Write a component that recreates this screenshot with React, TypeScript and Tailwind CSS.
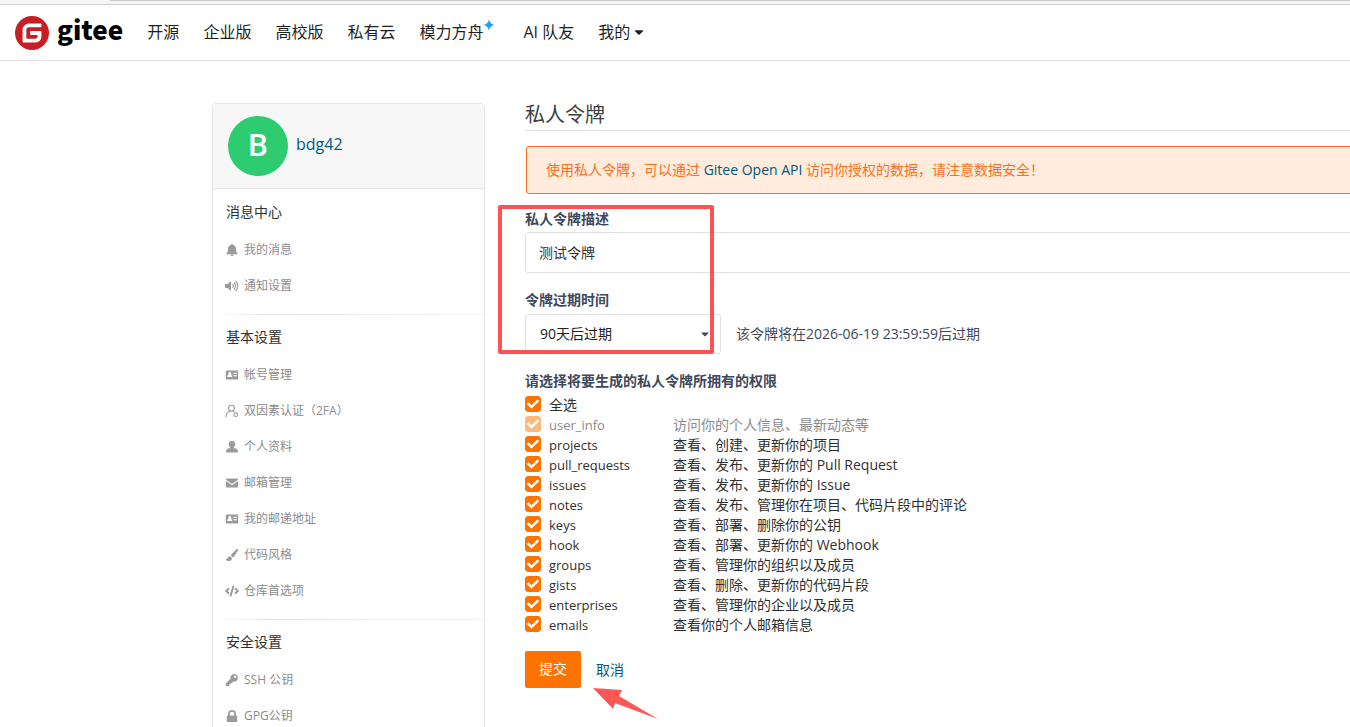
import type { ReactNode } from 'react'
import { FaCheck, FaCode, FaCaretDown } from 'react-icons/fa'
import { SiGitee } from 'react-icons/si'

type NavItem = { label: string; star?: boolean; caret?: boolean }
type MenuItem = { label: string; icon: ReactNode }
type Scope = { name: string; desc: string; locked?: boolean }

function Glyph({ children }: { children: ReactNode }) {
  return (
    <svg viewBox="0 0 14 14" className="size-3.5" fill="currentColor" aria-hidden="true">
      {children}
    </svg>
  )
}

const bell = (
  <Glyph>
    <path d="M7 1c.6 0 1 .4 1 .9 1.900.4 3 1.900 3 4 0 2.300.5 3.600 1.700 4.600v.8H1.300v-.8C2.500 9.500 3 8.200 3 5.900c0-2.100 1.100-3.600 3-4C6 1.400 6.400 1 7 1zM5.500 11.800h3a1.500 1.500 0 0 1-3 0z" />
  </Glyph>
)
const volume = (
  <Glyph>
    <path d="M0 5h2.500L6 2v10L2.500 9H0z" />
    <path d="M7.500 5.200a2.500 2.500 0 0 1 0 3.600M9 3.500a5 5 0 0 1 0 7M10.500 1.900a7 7 0 0 1 0 10.200" fill="none" stroke="currentColor" strokeWidth="1.100" />
  </Glyph>
)
const card = (
  <Glyph>
    <path fillRule="evenodd" d="M1.500 2.500h11c.4 0 .7.300.7.700v7.600c0 .4-.3.700-.7.700h-11c-.4 0-.7-.3-.7-.7V3.200c0-.4.3-.7.700-.7zM4.700 4a1.500 1.500 0 0 0-1 2.600C2.700 7 2.300 7.800 2.300 9h4.900c0-1.200-.4-2-1.400-2.400A1.500 1.500 0 0 0 4.700 4zM8.300 4.800v1h3.700v-1zM8.300 7.300v1h3.700v-1z" />
  </Glyph>
)
const userKey = (
  <Glyph>
    <g fill="none" stroke="currentColor" strokeWidth="1.100">
      <circle cx="6.500" cy="4.200" r="2.900" />
      <path d="M1 13c0-3.200 1.400-5 4-5.800M8 6.800l1.500 1.200" />
      <circle cx="10.700" cy="10.700" r="1.800" />
    </g>
  </Glyph>
)
const user = (
  <Glyph>
    <path d="M7 1a3.300 3.300 0 0 1 3.300 3.300c0 1.400-.6 2.500-1.500 3.100v.7c2.500.4 4.200 1.200 4.200 3.300v.6c0 .3-.3.500-.6.500H1.600c-.3 0-.6-.2-.6-.5v-.6c0-2.100 1.700-2.900 4.200-3.300v-.7C4.300 6.800 3.700 5.700 3.700 4.300A3.300 3.300 0 0 1 7 1z" />
  </Glyph>
)
const mail = (
  <Glyph>
    <path d="M1 3.200c0-.4.3-.7.700-.7h10.600c.4 0 .7.300.7.700v.5L7 8 1 3.700zM1 5l6 4.300L13 5v5.800c0 .4-.3.700-.7.700H1.700c-.4 0-.7-.3-.7-.7z" />
  </Glyph>
)
const brush = (
  <Glyph>
    <path d="M12.800 1.100c.5.400.3 1 .1 1.500L9.200 8.300c-.4.600-.9.900-1.500.9L6 7.600c0-.6.300-1.100.8-1.600l4.700-4.700c.4-.3.900-.5 1.300-.2zM5.200 8.200l1.800 1.700c0 2-1.300 3.100-3.400 3.100C2.100 13 1 12.300.7 10.900c.9.400 1.500.2 1.800-.7.400-1.300 1.400-2 2.700-2z" />
  </Glyph>
)
const key = (
  <Glyph>
    <path fillRule="evenodd" d="M9.200.9a3.900 3.900 0 1 1-1 7.700L6.900 9.900H5.600v1.300H4.300v1.300l-.6.500H1.300c-.3 0-.5-.2-.5-.5v-2l4.700-4.700A3.900 3.900 0 0 1 9.200.9zm1 1.700a1.200 1.200 0 1 0 0 2.400 1.200 1.200 0 0 0 0-2.400z" />
  </Glyph>
)
const lock = (
  <Glyph>
    <path fillRule="evenodd" d="M2.500 6.500H3V5a4 4 0 0 1 8 0v1.500h.5c.4 0 .7.300.7.700v5.100c0 .4-.3.700-.7.700h-9c-.4 0-.7-.3-.7-.7V7.200c0-.4.3-.7.700-.7zm2.300 0h4.400V5a2.200 2.200 0 0 0-4.400 0z" />
  </Glyph>
)

const navItems: NavItem[] = [
  { label: '开源' },
  { label: '企业版' },
  { label: '高校版' },
  { label: '私有云' },
  { label: '模力方舟', star: true },
  { label: 'AI 队友' },
  { label: '我的', caret: true },
]

const menu: { title: string; items: MenuItem[] }[] = [
  {
    title: '消息中心',
    items: [
      { label: '我的消息', icon: bell },
      { label: '通知设置', icon: volume },
    ],
  },
  {
    title: '基本设置',
    items: [
      { label: '帐号管理', icon: card },
      { label: '双因素认证（2FA）', icon: userKey },
      { label: '个人资料', icon: user },
      { label: '邮箱管理', icon: mail },
      { label: '我的邮递地址', icon: card },
      { label: '代码风格', icon: brush },
      { label: '仓库首选项', icon: <FaCode className="size-3.5" /> },
    ],
  },
  {
    title: '安全设置',
    items: [
      { label: 'SSH 公钥', icon: key },
      { label: 'GPG公钥', icon: lock },
    ],
  },
]

const scopes: Scope[] = [
  { name: 'user_info', desc: '访问你的个人信息、最新动态等', locked: true },
  { name: 'projects', desc: '查看、创建、更新你的项目' },
  { name: 'pull_requests', desc: '查看、发布、更新你的 Pull Request' },
  { name: 'issues', desc: '查看、发布、更新你的 Issue' },
  { name: 'notes', desc: '查看、发布、管理你在项目、代码片段中的评论' },
  { name: 'keys', desc: '查看、部署、删除你的公钥' },
  { name: 'hook', desc: '查看、部署、更新你的 Webhook' },
  { name: 'groups', desc: '查看、管理你的组织以及成员' },
  { name: 'gists', desc: '查看、删除、更新你的代码片段' },
  { name: 'enterprises', desc: '查看、管理你的企业以及成员' },
  { name: 'emails', desc: '查看你的个人邮箱信息' },
]

function Header() {
  return (
    <header className="flex h-14 items-center border-b border-[#e3e6e9] bg-white pl-[15px]">
      <a href="#" className="flex items-center gap-2 text-black">
        <SiGitee className="size-[34px] text-[#c71d23]" />
        <span className="pb-2 font-['Noto_Sans_CJK_SC',sans-serif] text-[26px] leading-8 font-black">gitee</span>
      </a>
      <nav className="ml-6 flex items-center gap-6 pb-0.5 text-base text-[#1f1f1f]">
        {navItems.map((item) => (
          <a key={item.label} href="#" className="flex items-center">
            {item.label}
            {item.star && (
              <svg viewBox="0 0 12 12" className="mr-1 mb-3.5 size-3" fill="#1e9fff" aria-hidden="true">
                <path d="M6 0c.7 3.500 2 5.100 6 6-4 .9-5.300 2.500-6 6-.7-3.500-2-5.100-6-6 4-.9 5.300-2.500 6-6z" />
              </svg>
            )}
            {item.caret && <FaCaretDown className="ml-0.5 size-3.5" />}
          </a>
        ))}
      </nav>
    </header>
  )
}

function Sidebar() {
  return (
    <aside className="w-[273px] shrink-0 rounded-t border border-[#e3e6e9]">
      <div className="flex items-center gap-2 border-b border-[#e3e6e9] bg-[#f7f7f8] py-3 pl-[15px]">
        <span className="flex size-[60px] items-center justify-center rounded-full bg-[#2ecc71] font-['Roboto',sans-serif] text-[31px] font-medium text-white">
          B
        </span>
        <a href="#" className="pb-1 text-base text-[#005980]">
          bdg42
        </a>
      </div>
      {menu.map((section, i) => (
        <section key={section.title}>
          {i > 0 && <div className="-mb-px h-px bg-linear-to-r from-transparent via-[#e3e6e9] via-20% to-[#f4f4f4]" />}
          <div className="pt-[5px] pb-2.5 pl-3">
            <h2 className="mb-0.5 flex h-9 items-center pl-px text-sm text-[#303030]">{section.title}</h2>
            {section.items.map((item) => (
              <a key={item.label} href="#" className="flex h-9 items-center gap-[5px] text-xs text-[#8c8c8c]">
                <span className="flex w-3.5 shrink-0 text-[#9b9b9b]">{item.icon}</span>
                {item.label}
              </a>
            ))}
          </div>
        </section>
      ))}
    </aside>
  )
}

function ScopeBox({ locked }: { locked?: boolean }) {
  return (
    <span className="mr-2 grid size-4 shrink-0">
      <input
        type="checkbox"
        defaultChecked
        disabled={locked}
        className="peer col-start-1 row-start-1 size-4 appearance-none rounded-[3px] border border-[#dce3e8] checked:border-[#fe7300] checked:bg-[#fe7300] disabled:opacity-50"
      />
      <FaCheck className="pointer-events-none invisible z-10 col-start-1 row-start-1 size-3 place-self-center text-white peer-checked:visible" />
    </span>
  )
}

function TokenForm() {
  return (
    <form className="relative text-sm leading-5" onSubmit={(e) => e.preventDefault()}>
      <label htmlFor="desc" className="block pt-[15px] pb-[3px] font-bold text-[#40485b]">
        私人令牌描述
      </label>
      <input
        id="desc"
        defaultValue="测试令牌"
        className="h-[41px] w-full rounded-[3px] border border-[#dfe1e6] bg-white px-[13px] pb-0.5 text-[#303030] outline-none"
      />
      <label htmlFor="expire" className="block pt-[17px] pb-1 font-bold text-[#40485b]">
        令牌过期时间
      </label>
      <div className="flex items-center gap-[15px]">
        <div className="grid w-[196px] items-center">
          <select
            id="expire"
            className="col-start-1 row-start-1 h-10 appearance-none rounded-[3px] border border-[#dfe1e6] bg-white px-3.5 text-[#212121] outline-none"
          >
            <option>90天后过期</option>
          </select>
          <FaCaretDown className="pointer-events-none col-start-1 row-start-1 mr-2.5 size-3 justify-self-end text-[#40485b]" />
        </div>
        <span className="text-[#40485b]">该令牌将在2026-06-19 23:59:59后过期</span>
      </div>
      <fieldset>
        <legend className="pt-[17px] pb-[5px] font-bold text-[#40485b]">请选择将要生成的私人令牌所拥有的权限</legend>
        <label className="flex h-5 leading-[18px] text-[#303030]">
          <ScopeBox />
          全选
        </label>
        <ul>
          {scopes.map((scope) => (
            <li key={scope.name}>
              <label className={scope.locked ? 'flex h-5 leading-[18px] text-[#8c8c8c]' : 'flex h-5 leading-[18px] text-[#303030]'}>
                <ScopeBox locked={scope.locked} />
                <span className="w-[124px] shrink-0 text-[13px]">{scope.name}</span>
                <span>{scope.desc}</span>
              </label>
            </li>
          ))}
        </ul>
      </fieldset>
      <div className="relative mt-[15px] flex items-center gap-[15px]">
        <button type="submit" className="h-[37px] w-14 rounded-[2px] bg-[#fe7300] pb-0.5 text-white">
          提交
        </button>
        <a href="#" className="text-[#005980]">
          取消
        </a>
        <svg viewBox="0 0 65 31" className="absolute top-[37px] left-[68px] h-[31px] w-[65px]" fill="#ff5656" aria-hidden="true">
          <path d="M0 0l29 2-3 6 39 23-43-16-2 6z" />
        </svg>
      </div>
      <div className="pointer-events-none absolute top-[11px] -left-[27px] h-[149px] w-[216px] rounded-[2px] border-4 border-[#ff5252]" />
    </form>
  )
}

export default function App() {
  return (
    <div className="h-screen overflow-hidden bg-white font-['Open_Sans','Noto_Sans_CJK_SC',sans-serif]">
      <div className="h-[5px] border-b border-[#d0d0d0] bg-[#f5f5f5]">
        <div className="ml-[110px] h-px bg-[#c8c8c8]" />
      </div>
      <Header />
      <div className="ml-[212px] flex items-start gap-10 pt-[42px]">
        <Sidebar />
        <main className="-mr-4 min-w-0 flex-1">
          <h1 className="h-7 border-b border-[#dfe1e6] text-xl leading-6 text-[#404040]">私人令牌</h1>
          <div className="mt-[15px] ml-px rounded-[3px] border border-[#f8701d] bg-[#ffecdc] px-[19px] py-[13px] text-sm leading-5 text-[#f8701d]">
            使用私人令牌，可以通过{' '}
            <a href="#" className="text-[#005980]">
              Gitee Open API
            </a>{' '}
            访问你授权的数据，请注意数据安全！
          </div>
          <TokenForm />
        </main>
      </div>
    </div>
  )
}
